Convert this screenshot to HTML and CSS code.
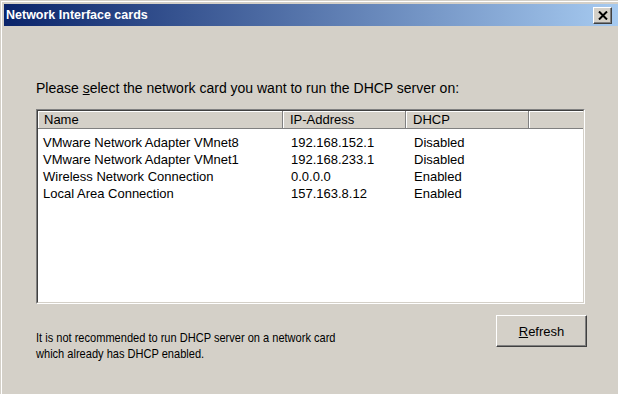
FILE: index.html
```html
<!DOCTYPE html>
<html lang="en">
<head>
  <meta charset="UTF-8">
  <title>Network Interface cards</title>
  <link rel="stylesheet" href="styles.css">
</head>
<body>

  <div class="window">
    <!-- Title bar -->
    <div class="titlebar">
      <span class="title">Network Interface cards</span>
      <button class="close-btn" aria-label="Close">
        <svg width="10" height="9" viewBox="0 0 10 9">
          <path d="M1 0.5 L9 8.5 M9 0.5 L1 8.5" stroke="#000" stroke-width="2" fill="none"/>
        </svg>
      </button>
    </div>

    <div class="dialog-body">
      <p class="prompt">Please <u>s</u>elect the network card you want to run the DHCP server on:</p>

      <!-- Network card list -->
      <div class="listview">
        <div class="list-inner">
          <div class="list-header">
            <div class="head-cell">Name</div>
            <div class="head-cell">IP-Address</div>
            <div class="head-cell">DHCP</div>
            <div class="head-cell filler"></div>
          </div>
          <div class="list-rows">
            <div class="list-row"><span>VMware Network Adapter VMnet8</span><span>192.168.152.1</span><span>Disabled</span></div>
            <div class="list-row"><span>VMware Network Adapter VMnet1</span><span>192.168.233.1</span><span>Disabled</span></div>
            <div class="list-row"><span>Wireless Network Connection</span><span>0.0.0.0</span><span>Enabled</span></div>
            <div class="list-row"><span>Local Area Connection</span><span>157.163.8.12</span><span>Enabled</span></div>
          </div>
        </div>
      </div>

      <div class="footer">
        <p class="note">It is not recommended to run DHCP server on a network card<br>which already has DHCP enabled.</p>
        <button class="refresh-btn"><u>R</u>efresh</button>
      </div>
    </div>
  </div>

</body>
</html>
```

FILE: styles.css
```css
body {
  margin: 0;
  background-color: #d4d0c8;
  font-family: "Liberation Sans", Arial, sans-serif;
  font-size: 13px;
  color: #000;
  overflow: hidden;
}

.window {
  height: 394px;
  box-sizing: border-box;
  padding: 4px 0 0 4px;
  box-shadow: inset 1px 1px 0 #d4d0c8, inset 2px 2px 0 #ffffff;
}

/* Title bar */
.titlebar {
  height: 22px;
  display: flex;
  align-items: center;
  justify-content: space-between;
  padding-left: 2px;
  background: linear-gradient(to right, #0a246a, #a6caf0);
}

.title {
  color: white;
  font-weight: bold;
  font-size: 12.5px;
}

.close-btn {
  width: 19px;
  height: 17px;
  margin-right: 6px;
  padding: 0;
  display: flex;
  align-items: center;
  justify-content: center;
  background-color: #d4d0c8;
  border: 1px solid;
  border-color: #ffffff #404040 #404040 #ffffff;
  box-shadow: inset -1px -1px 0 #808080;
}

/* Dialog content */
.dialog-body {
  padding: 54px 0 0 32px;
}

.prompt {
  margin: 0;
  font-size: 14px;
  line-height: 16px;
}

.listview {
  margin-top: 13px;
  width: 549px;
  height: 195px;
  box-sizing: border-box;
  border: 1px solid;
  border-color: #808080 #ffffff #ffffff #808080;
}

.list-inner {
  height: 100%;
  box-sizing: border-box;
  border: 1px solid;
  border-color: #404040 #d4d0c8 #d4d0c8 #404040;
  background-color: white;
}

.list-header {
  display: grid;
  grid-template-columns: 245px 123px 123px 1fr;
  height: 18px;
  background-color: #d4d0c8;
  border-bottom: 1px solid #808080;
  box-sizing: border-box;
}

.head-cell {
  line-height: 17px;
  padding-left: 7px;
  border-right: 1px solid #808080;
  box-shadow: inset 1px 1px 0 #ffffff;
}

.head-cell:first-child {
  padding-left: 6px;
}

.head-cell.filler {
  border-right: none;
}

.list-rows {
  padding-top: 5px;
}

.list-row {
  display: grid;
  grid-template-columns: 245px 123px 123px;
  line-height: 17px;
}

.list-row span {
  padding-left: 8px;
}

.list-row span:first-child {
  padding-left: 5px;
}

/* Footer */
.footer {
  width: 551px;
  display: flex;
  justify-content: space-between;
  align-items: flex-start;
}

.note {
  margin: 26px 0 0 0;
  font-size: 13px;
  line-height: 16px;
  white-space: nowrap;
  transform: scaleX(0.85);
  transform-origin: left top;
}

.refresh-btn {
  margin-top: 11px;
  width: 91px;
  height: 32px;
  font-family: "Liberation Sans", Arial, sans-serif;
  font-size: 13px;
  color: #000;
  background-color: #d4d0c8;
  border: 1px solid;
  border-color: #ffffff #404040 #404040 #ffffff;
  box-shadow: inset -1px -1px 0 #808080;
}
```
